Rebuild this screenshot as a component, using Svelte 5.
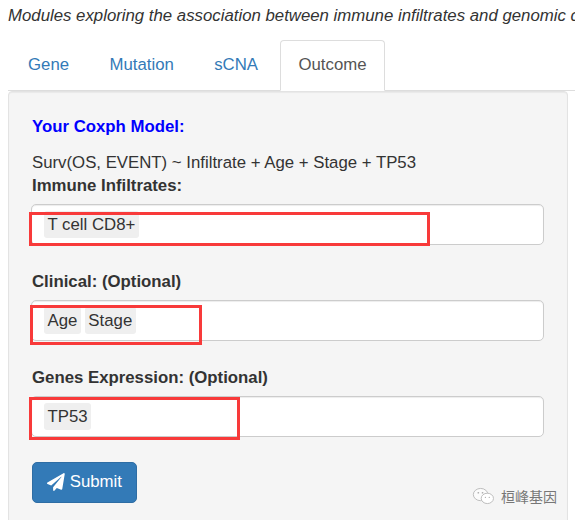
<script>
	let tabs = ['Gene', 'Mutation', 'sCNA', 'Outcome'];
	let active = 'Outcome';
	let fields = [
		{ label: 'Immune Infiltrates:', items: ['T cell CD8+'], mark: 'mark-a' },
		{ label: 'Clinical: (Optional)', items: ['Age', 'Stage'], mark: 'mark-b' },
		{ label: 'Genes Expression: (Optional)', items: ['TP53'], mark: 'mark-c' }
	];
</script>

<div class="page">
	<p class="intro">Modules exploring the association between immune infiltrates and genomic changes</p>

	<ul class="tabs">
		{#each tabs as tab}
			<li class="tab" class:active={tab === active}>{tab}</li>
		{/each}
	</ul>

	<div class="well">
		<h4 class="model-title">Your Coxph Model:</h4>
		<p class="formula">Surv(OS, EVENT) ~ Infiltrate + Age + Stage + TP53</p>

		{#each fields as field}
			<div class="field">
				<label class="field-label" for={field.mark}>{field.label}</label>
				<div class="select" id={field.mark}>
					{#each field.items as item}
						<span class="chip">{item}</span>
					{/each}
					<span class="mark {field.mark}"></span>
				</div>
			</div>
		{/each}

		<button class="submit">
			<svg class="plane" viewBox="0 0 512 512" aria-hidden="true">
				<path fill="currentColor" d="M476 3.2L12.5 270.6c-18.1 10.4-15.8 35.6 2.2 43.2L121 358.4l287.3-253.2c5.5-4.9 13.3 2.6 8.6 8.3L176 407v80.5c0 23.6 28.5 32.9 42.5 15.8L282 426l124.6 52.2c14.2 6 30.4-2.9 33-18.2l72-432C515 7.8 493.3-6.8 476 3.2z" />
			</svg>
			Submit
		</button>
	</div>

	<div class="watermark">
		<svg class="wechat" viewBox="0 0 24 18" aria-hidden="true">
			<ellipse cx="9" cy="7.5" rx="7.6" ry="6.4" fill="#fbfbfb" stroke="#bbb" stroke-width="1" />
			<ellipse cx="16" cy="11.5" rx="6.4" ry="5.4" fill="#fff" stroke="#bbb" stroke-width="1" />
			<circle cx="6.6" cy="5.6" r="0.9" fill="#aaa" />
			<circle cx="11" cy="5.6" r="0.9" fill="#aaa" />
			<circle cx="14" cy="10.4" r="0.7" fill="#aaa" />
			<circle cx="18" cy="10.4" r="0.7" fill="#aaa" />
		</svg>
		<span>桓峰基因</span>
	</div>
</div>

<style>
	:global(body) {
		overflow: hidden;
		background: #fff;
	}
	.page {
		position: relative;
		height: 520px;
		overflow: hidden;
		padding-left: 8px;
		font-family: "Liberation Sans", Arial, sans-serif;
		font-size: 16.8px;
		line-height: 24px;
		color: #333;
	}
	.intro {
		margin: 0;
		padding-top: 4px;
		height: 40px;
		font-style: italic;
		white-space: nowrap;
		box-sizing: border-box;
	}
	.tabs {
		display: flex;
		gap: 3.4px;
		list-style: none;
		margin: 0;
		padding: 0 0 0 1.5px;
		height: 51px;
		box-sizing: border-box;
		border-bottom: 1px solid #ddd;
	}
	.tab {
		box-sizing: border-box;
		height: 51px;
		padding: 12px 17.5px;
		border: 1px solid transparent;
		color: #337ab7;
	}
	.tab.active {
		color: #555;
		background: #fff;
		border-color: #ddd #ddd #fff;
		border-radius: 4px 4px 0 0;
	}
	.well {
		box-sizing: border-box;
		width: 560px;
		height: 460px;
		padding: 23px;
		background: #f5f5f5;
		border: 1px solid #e3e3e3;
		border-radius: 4px;
		box-shadow: inset 0 1px 1px rgba(0, 0, 0, 0.05);
	}
	.model-title {
		margin: 0;
		font-size: 16.8px;
		font-weight: bold;
		color: #00f;
	}
	.formula {
		margin: 12px 0 0;
		height: 23px;
	}
	.field {
		margin-bottom: 25px;
	}
	.field-label {
		display: block;
		font-weight: bold;
		margin-bottom: 6px;
	}
	.select {
		position: relative;
		box-sizing: border-box;
		display: flex;
		align-items: flex-start;
		gap: 4px;
		width: 513px;
		height: 41px;
		margin-left: -1px;
		padding: 6px 12px;
		background: #fff;
		border: 1px solid #ccc;
		border-radius: 5px;
		box-shadow: inset 0 1px 1px rgba(0, 0, 0, 0.075);
	}
	.chip {
		padding: 1.5px 3.5px;
		background: #efefef;
		border-radius: 3px;
	}
	.mark {
		position: absolute;
		box-sizing: border-box;
		left: -3px;
		border: 3px solid #f83a3a;
	}
	.mark-a {
		top: 7px;
		width: 401px;
		height: 34px;
	}
	.mark-b {
		left: -2px;
		top: 4px;
		width: 172px;
		height: 40px;
	}
	.mark-c {
		top: 0;
		width: 211px;
		height: 43px;
	}
	.submit {
		display: flex;
		align-items: center;
		gap: 5px;
		box-sizing: border-box;
		width: 105px;
		height: 41px;
		padding: 0 14px 2px;
		font: inherit;
		color: #fff;
		background: #337ab7;
		border: 1px solid #2e6da4;
		border-radius: 5px;
	}
	.plane {
		width: 18px;
		height: 18px;
	}
	.watermark {
		position: absolute;
		left: 472px;
		top: 484px;
		display: flex;
		align-items: center;
		gap: 6px;
		font-family: "Noto Sans CJK SC", sans-serif;
		font-size: 14px;
		color: #777;
	}
	.wechat {
		width: 23px;
		height: 18px;
	}
</style>
